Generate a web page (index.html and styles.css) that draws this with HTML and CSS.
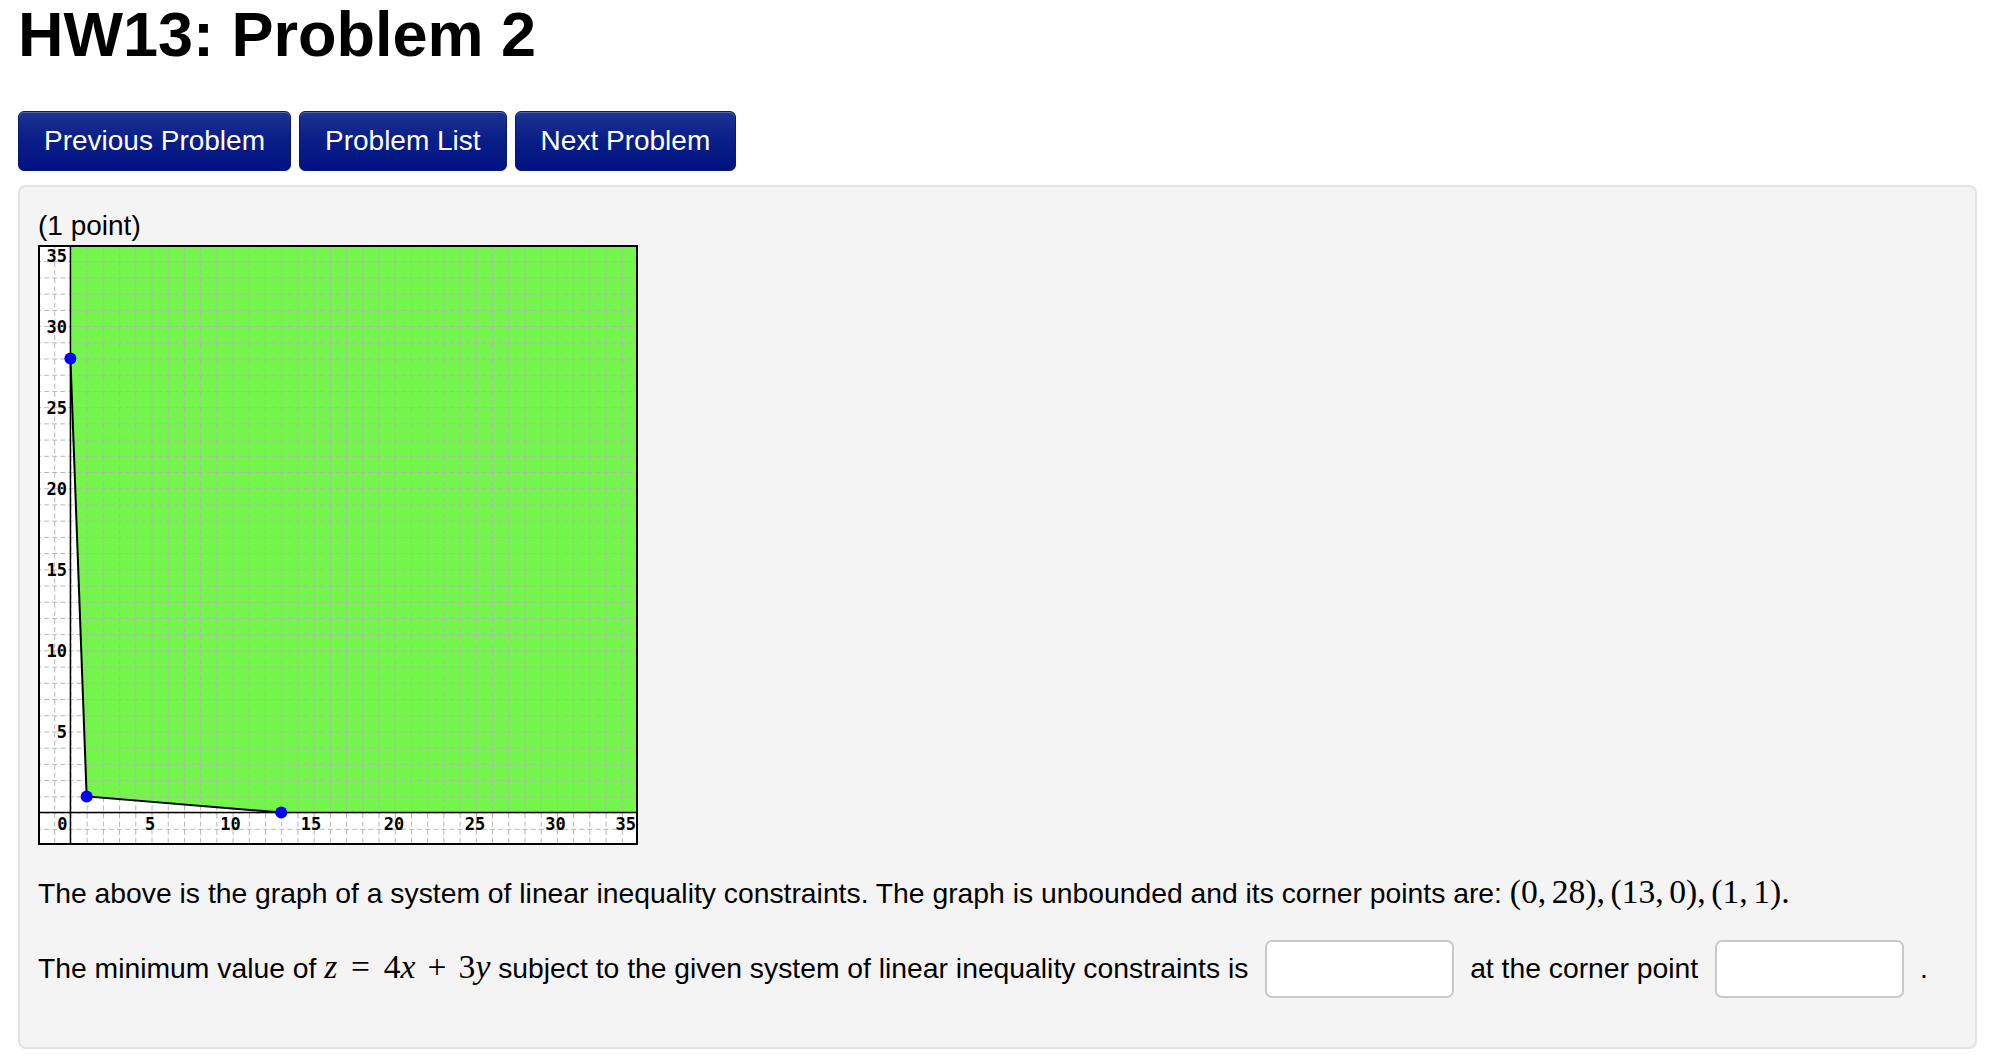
FILE: index.html
```html
<!DOCTYPE html>
<html lang="en">
<head>
<meta charset="utf-8">
<title>HW13: Problem 2</title>
<link rel="stylesheet" href="styles.css">
</head>
<body>
<div class="page">
  <h1 class="title">HW13: Problem 2</h1>
  <nav class="nav">
    <a class="btn" href="#">Previous Problem</a>
    <a class="btn" href="#">Problem List</a>
    <a class="btn" href="#">Next Problem</a>
  </nav>
  <div class="well">
    <div class="points">(1 point)</div>
    <svg class="graph" width="600" height="600" viewBox="0 0 600 600">
      <defs>
        <pattern id="grid" x="0" y="0" width="16.216" height="16.216" patternUnits="userSpaceOnUse">
          <line class="grid-line grid-h" x1="0" y1="0.5" x2="16.216" y2="0.5"/>
          <line class="grid-line grid-v" x1="0.5" y1="0" x2="0.5" y2="16.216"/>
        </pattern>
      </defs>
      <rect class="plot-bg" x="0" y="0" width="600" height="600"/>
      <polygon class="region" points="32.43,0 32.43,113.5 48.65,551.4 243.24,567.57 600,567.57 600,0"/>
      <rect class="grid" x="0" y="0" width="600" height="600"/>
      <line class="axis" x1="32.43" y1="0" x2="32.43" y2="600"/>
      <line class="axis" x1="0" y1="567.57" x2="600" y2="567.57"/>
      <polyline class="boundary" points="32.43,113.5 48.65,551.4 243.24,567.57"/>
      <circle class="corner" cx="32.43" cy="113.5" r="6"/>
      <circle class="corner" cx="48.65" cy="551.4" r="6"/>
      <circle class="corner" cx="243.24" cy="567.57" r="6"/>
      <text class="tick tick-end" x="29" y="17">35</text>
      <text class="tick tick-end" x="29" y="88">30</text>
      <text class="tick tick-end" x="29" y="168.5">25</text>
      <text class="tick tick-end" x="29" y="249.5">20</text>
      <text class="tick tick-end" x="29" y="330.6">15</text>
      <text class="tick tick-end" x="29" y="411.7">10</text>
      <text class="tick tick-end" x="29" y="492.8">5</text>
      <text class="tick tick-end" x="29.5" y="585">0</text>
      <text class="tick tick-mid" x="112" y="585">5</text>
      <text class="tick tick-mid" x="192.5" y="585">10</text>
      <text class="tick tick-mid" x="273" y="585">15</text>
      <text class="tick tick-mid" x="356" y="585">20</text>
      <text class="tick tick-mid" x="437" y="585">25</text>
      <text class="tick tick-mid" x="517.5" y="585">30</text>
      <text class="tick tick-end" x="598" y="585">35</text>
      <rect class="frame" x="1" y="1" width="598" height="598"/>
    </svg>
    <p class="text first">The above is the graph of a system of linear inequality constraints. The graph is unbounded and its corner points are: <span class="math">(0,<span class="thin"></span>28),<span class="thin"></span>(13,<span class="thin"></span>0),<span class="thin"></span>(1,<span class="thin"></span>1).</span></p>
    <p class="text second">The minimum value of <span class="math"><i>z</i><span class="rel">=</span>4<i>x</i><span class="bin">+</span>3<i>y</i></span> subject to the given system of linear inequality constraints is <input class="answer" type="text" aria-label="minimum value"> at the corner point <input class="answer" type="text" aria-label="corner point"> .</p>
  </div>
</div>
</body>
</html>
```

FILE: styles.css
```css
* {
  box-sizing: border-box;
}

body {
  margin: 0;
  background: #ffffff;
  color: #000000;
  font-family: "Liberation Sans", Arial, Helvetica, sans-serif;
}

.page {
  padding: 0 27px 0 18px;
}

.title {
  margin: 0;
  font-size: 63px;
  line-height: 69px;
  font-weight: bold;
  color: #000;
}

.nav {
  display: flex;
  gap: 8px;
  margin-top: 42px;
}

.btn {
  display: flex;
  align-items: center;
  height: 60px;
  padding: 0 25px;
  border: 1px solid #081a6e;
  border-radius: 6px;
  background: linear-gradient(to bottom, #1d3492 0%, #0a1f88 45%, #001282 100%);
  box-shadow: inset 0 1px 0 rgba(255, 255, 255, 0.25);
  color: #ffffff;
  font-size: 28px;
  line-height: 1;
  text-decoration: none;
  white-space: nowrap;
}

.well {
  margin-top: 14px;
  padding: 19px 18px;
  background: #f4f4f4;
  border: 2px solid #e3e3e3;
  border-radius: 8px;
  font-size: 28.3px;
}

.points {
  font-size: 28px;
  line-height: 39px;
}

.graph {
  display: block;
}

.plot-bg {
  fill: #ffffff;
}

.region {
  fill: #74f54c;
}

.grid {
  fill: url(#grid);
}

.grid-line {
  stroke: #b3b3b3;
  stroke-width: 1;
  stroke-dasharray: 5 3.108;
}

.grid-h {
  stroke-dashoffset: 2;
}

.grid-v {
  stroke-dashoffset: -1;
}

.axis {
  stroke: #000;
  stroke-width: 1.5;
}

.boundary {
  fill: none;
  stroke: #000;
  stroke-width: 2;
}

.corner {
  fill: #0000ff;
}

.tick {
  font-family: "DejaVu Sans Mono", "Liberation Mono", monospace;
  font-weight: bold;
  font-size: 17px;
  fill: #000;
}

.tick-end {
  text-anchor: end;
}

.tick-mid {
  text-anchor: middle;
}

.frame {
  fill: none;
  stroke: #000;
  stroke-width: 2;
}

.text {
  margin: 0;
  line-height: 40px;
}

.first {
  margin-top: 26.5px;
}

.second {
  margin-top: 27px;
  margin-bottom: 30.5px;
  white-space: nowrap;
}

.math {
  font-family: "Liberation Serif", "Times New Roman", serif;
  font-size: 33.6px;
}

.math i {
  font-style: italic;
}

.thin {
  display: inline-block;
  width: 0.167em;
}

.rel {
  margin: 0 0.41em;
}

.bin {
  margin: 0 0.36em;
}

.answer {
  display: inline-block;
  width: 189px;
  height: 58px;
  margin: 0 8.5px;
  padding: 0 8px;
  border: 2px solid #c9c9c9;
  border-radius: 7px;
  background: #ffffff;
  font-family: "Liberation Sans", Arial, sans-serif;
  font-size: 28px;
  vertical-align: baseline;
}
```
